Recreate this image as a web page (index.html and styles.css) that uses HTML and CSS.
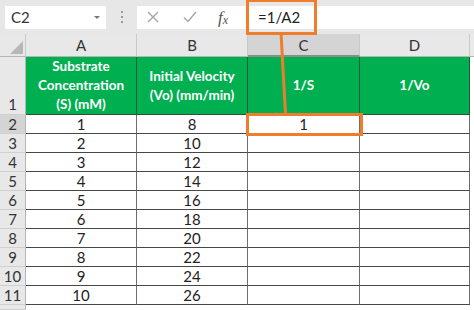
FILE: index.html
```html
<!DOCTYPE html>
<html lang="en">
<head>
  <meta charset="UTF-8" />
  <meta name="viewport" content="width=device-width, initial-scale=1.0"/>
  <title>Lineweaver-Burk Sheet</title>
  <link rel="stylesheet" href="styles.css">
</head>
<body>

<div class="app">

  <div class="formula-bar">
    <div class="name-box">
      <span>C2</span>
      <span class="caret"></span>
    </div>
    <div class="grip"><i></i><i></i><i></i></div>
    <div class="formula-input">
      <div class="tools">
        <svg class="tool" width="14" height="14" viewBox="0 0 14 14">
          <path d="M2 2 L12 12 M12 2 L2 12" stroke="#a6a6a6" stroke-width="1.4" fill="none"/>
        </svg>
        <svg class="tool" width="16" height="14" viewBox="0 0 16 14">
          <path d="M2 7.5 L6 11.5 L14 2" stroke="#a6a6a6" stroke-width="1.4" fill="none"/>
        </svg>
        <span class="fx">f<sub>x</sub></span>
      </div>
      <span class="formula">=1/A2</span>
    </div>
  </div>

  <div class="sheet">
    <div class="col-head corner"><span class="tri"></span></div>
    <div class="col-head">A</div>
    <div class="col-head">B</div>
    <div class="col-head active">C</div>
    <div class="col-head">D</div>
    <div class="col-head blank"></div>

    <div class="row-head first">1</div>
    <div class="title">Substrate<br>Concentration<br>(S) (mM)</div>
    <div class="title">Initial Velocity<br>(Vo) (mm/min)</div>
    <div class="title">1/S</div>
    <div class="title">1/Vo</div>
    <div class="blank"></div>

    <div class="row-head active">2</div>
    <div class="cell">1</div><div class="cell">8</div><div class="cell">1</div><div class="cell"></div><div class="blank"></div>
    <div class="row-head">3</div>
    <div class="cell">2</div><div class="cell">10</div><div class="cell"></div><div class="cell"></div><div class="blank"></div>
    <div class="row-head">4</div>
    <div class="cell">3</div><div class="cell">12</div><div class="cell"></div><div class="cell"></div><div class="blank"></div>
    <div class="row-head">5</div>
    <div class="cell">4</div><div class="cell">14</div><div class="cell"></div><div class="cell"></div><div class="blank"></div>
    <div class="row-head">6</div>
    <div class="cell">5</div><div class="cell">16</div><div class="cell"></div><div class="cell"></div><div class="blank"></div>
    <div class="row-head">7</div>
    <div class="cell">6</div><div class="cell">18</div><div class="cell"></div><div class="cell"></div><div class="blank"></div>
    <div class="row-head">8</div>
    <div class="cell">7</div><div class="cell">20</div><div class="cell"></div><div class="cell"></div><div class="blank"></div>
    <div class="row-head">9</div>
    <div class="cell">8</div><div class="cell">22</div><div class="cell"></div><div class="cell"></div><div class="blank"></div>
    <div class="row-head">10</div>
    <div class="cell">9</div><div class="cell">24</div><div class="cell"></div><div class="cell"></div><div class="blank"></div>
    <div class="row-head">11</div>
    <div class="cell">10</div><div class="cell">26</div><div class="cell"></div><div class="cell"></div><div class="blank"></div>
    <div class="row-head"></div>
    <div class="blank"></div><div class="blank"></div><div class="blank"></div><div class="blank"></div><div class="blank"></div>
  </div>

  <!-- annotation: formula callout linked to the selected cell -->
  <div class="callout"></div>
  <svg class="connector" width="474" height="310">
    <line x1="281" y1="33" x2="285.5" y2="114" stroke="#ef7d2e" stroke-width="3"/>
  </svg>
  <div class="cell-focus"></div>

</div>

</body>
</html>
```

FILE: styles.css
```css
body {
  margin: 0;
  background: #fff;
  font-family: Lato, 'Open Sans', sans-serif;
  overflow: hidden;
}

.app {
  position: relative;
  width: 474px;
  height: 310px;
}

/* formula bar */

.formula-bar {
  display: flex;
  align-items: center;
  height: 34px;
  padding: 0 0 0 5px;
  background: #e7e7e7;
  box-sizing: border-box;
}

.name-box {
  display: flex;
  align-items: center;
  justify-content: space-between;
  width: 101px;
  height: 23px;
  padding: 0 6px 0 6px;
  box-sizing: border-box;
  background: #fff;
  font-size: 15px;
  color: #333;
}

.caret {
  width: 0;
  height: 0;
  border-left: 3px solid transparent;
  border-right: 3px solid transparent;
  border-top: 3px solid #777;
  margin-top: 1px;
}

.grip {
  display: flex;
  flex-direction: column;
  align-items: center;
  gap: 3px;
  width: 31px;
}

.grip i {
  width: 2px;
  height: 2px;
  background: #9a9a9a;
}

.formula-input {
  flex: 1;
  display: flex;
  align-items: center;
  height: 23px;
  background: #fff;
}

.tools {
  display: flex;
  align-items: center;
  width: 110px;
  padding-left: 9px;
  box-sizing: border-box;
}

.tool {
  margin-right: 22px;
}

.tools .tool:nth-child(2) {
  margin-right: 20px;
}

.fx {
  font-family: 'Liberation Serif', serif;
  font-style: italic;
  font-size: 17px;
  color: #555;
  line-height: 1;
}

.fx sub {
  font-size: 12px;
  vertical-align: -1px;
}

.formula {
  margin-left: 11px;
  font-size: 15px;
  color: #222;
}

/* sheet grid */

.sheet {
  display: grid;
  grid-template-columns: 26px 111px 111px 112px 110px 1fr;
  grid-template-rows: 23px 58px repeat(10, 19px) 1fr;
  height: 276px;
}

.col-head {
  display: flex;
  align-items: center;
  justify-content: center;
  background: #e8e8e8;
  border-right: 1px solid #c9c9c9;
  border-bottom: 1px solid #b5b5b5;
  font-size: 15px;
  color: #333;
}

.col-head.active {
  background: #d4d4d4;
  border-bottom: 2px solid #8c8c8c;
}

.col-head.blank {
  background: #eaeaea;
  border-right: none;
}

.corner {
  position: relative;
}

.tri {
  position: absolute;
  right: 2px;
  bottom: 2px;
  width: 0;
  height: 0;
  border-left: 13px solid transparent;
  border-bottom: 13px solid #b7b7b7;
}

.row-head {
  display: flex;
  align-items: center;
  justify-content: center;
  background: #e8e8e8;
  border-right: 1px solid #b5b5b5;
  border-bottom: 1px solid #d0d0d0;
  font-size: 15px;
  color: #333;
}

.row-head.first {
  align-items: flex-end;
  padding-bottom: 1px;
}

.row-head.active {
  background: #d4d4d4;
}

.title {
  display: flex;
  align-items: center;
  justify-content: center;
  text-align: center;
  background: #00b050;
  border-right: 1px solid #1f5a33;
  border-bottom: 1px solid #2f4f3a;
  color: #fff;
  font-weight: bold;
  font-size: 13.5px;
  line-height: 19px;
}

.cell {
  display: flex;
  align-items: center;
  justify-content: center;
  background: #fff;
  border-right: 1px solid #6e6e6e;
  border-bottom: 1px solid #474747;
  font-size: 15px;
  color: #222;
}

.blank {
  background: #fff;
}

/* annotation overlay */

.callout {
  position: absolute;
  left: 246px;
  top: -1px;
  width: 71px;
  height: 36px;
  border: 3px solid #ef7d2e;
  box-sizing: border-box;
}

.connector {
  position: absolute;
  left: 0;
  top: 0;
  pointer-events: none;
}

.cell-focus {
  position: absolute;
  left: 246px;
  top: 113px;
  width: 117px;
  height: 23px;
  border: 3px solid #ef7d2e;
  box-sizing: border-box;
}
```
